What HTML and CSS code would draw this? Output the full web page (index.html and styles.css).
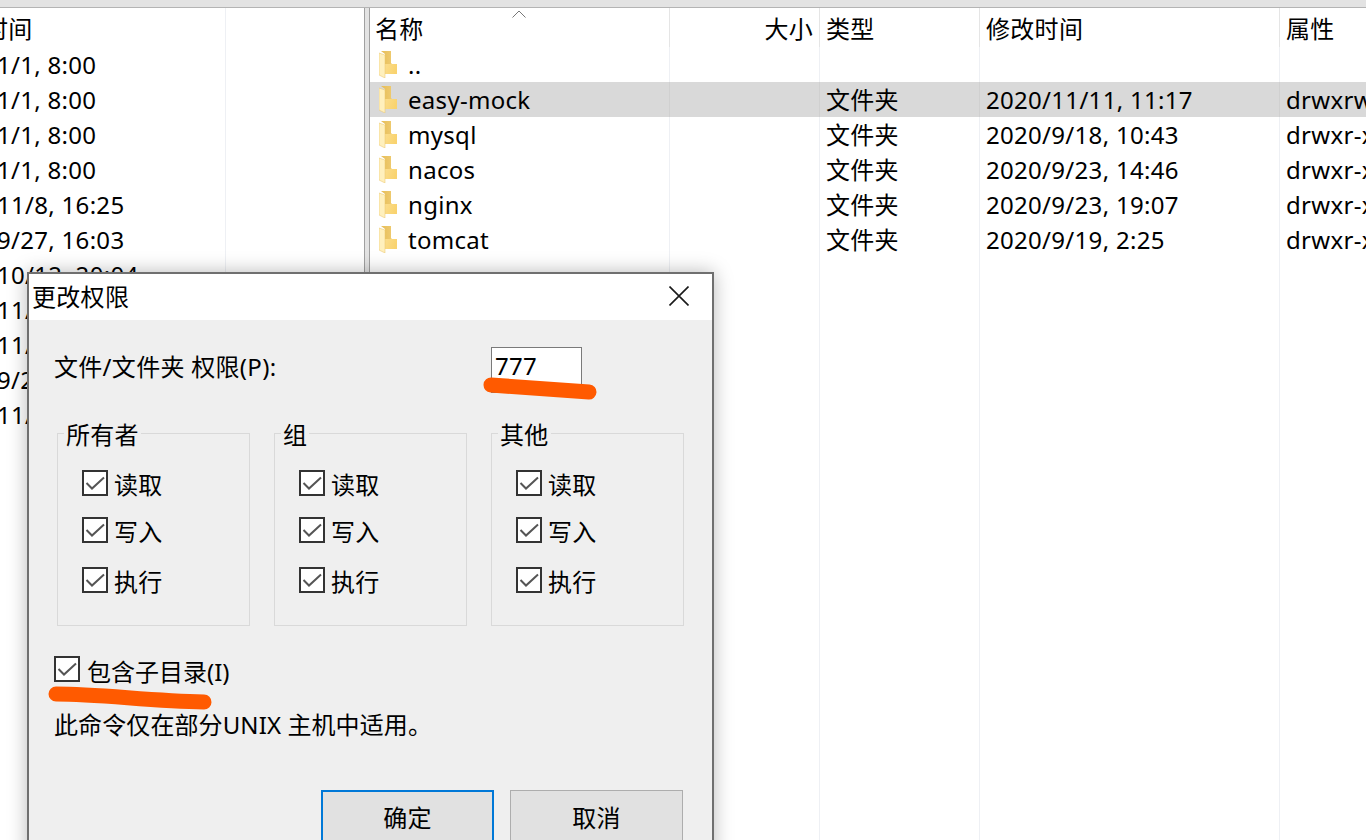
FILE: index.html
```html
<!DOCTYPE html>
<html lang="zh-CN">
<head>
    <meta charset="UTF-8">
    <title>更改权限</title>
    <link rel="stylesheet" href="styles.css">
</head>
<body>
    <svg class="defs" width="0" height="0">
        <symbol id="folder" viewBox="0 0 18 27">
            <defs>
                <linearGradient id="fold-back" x1="0" y1="0" x2="1" y2="0">
                    <stop offset="0" stop-color="#e6bd58"/>
                    <stop offset="1" stop-color="#f3d17a"/>
                </linearGradient>
                <linearGradient id="fold-front" x1="0" y1="0" x2="1" y2="0.3">
                    <stop offset="0" stop-color="#fbdd8c"/>
                    <stop offset="1" stop-color="#f9d36f"/>
                </linearGradient>
            </defs>
            <path d="M2 0H12V12L13 13H18V23H6V3Z" fill="url(#fold-back)"/>
            <path d="M6 13H18V23H6Z" fill="url(#fold-front)"/>
            <path d="M0 2L6 4V27L0 24Z" fill="#fff0bd" stroke="#e8c56a" stroke-width=".5"/>
        </symbol>
        <symbol id="check" viewBox="0 0 22 22">
            <path d="M2.5 11L8 16.5L20 5.5" fill="none" stroke="#555" stroke-width="2"/>
        </symbol>
    </svg>

    <div class="topbar"></div>

    <div class="panes">
        <div class="pane-left">
            <div class="left-col">
                <div class="head clip-head">时间</div>
                <div class="row clip">1/1, 8:00</div>
                <div class="row clip">1/1, 8:00</div>
                <div class="row clip">1/1, 8:00</div>
                <div class="row clip">1/1, 8:00</div>
                <div class="row clip">11/8, 16:25</div>
                <div class="row clip">9/27, 16:03</div>
                <div class="row clip">10/12, 20:04</div>
                <div class="row clip">11/</div>
                <div class="row clip">11/</div>
                <div class="row clip">9/2</div>
                <div class="row clip">11/</div>
            </div>
            <div class="left-rest">
                <div class="head"></div>
            </div>
        </div>

        <div class="splitter"></div>

        <div class="pane-right">
            <div class="table">
                <div class="head c-name">名称<svg class="sort" width="14" height="8" viewBox="0 0 14 8"><path d="M.5 7.5L7 1L13.5 7.5" fill="none" stroke="#777"/></svg></div>
                <div class="head c-size">大小</div>
                <div class="head c-type">类型</div>
                <div class="head c-date">修改时间</div>
                <div class="head c-attr">属性</div>

                <div class="cell c-name"><svg class="icon"><use href="#folder"/></svg>..</div>
                <div class="cell c-size"></div>
                <div class="cell c-type"></div>
                <div class="cell c-date"></div>
                <div class="cell c-attr"></div>

                <div class="cell c-name sel"><svg class="icon"><use href="#folder"/></svg>easy-mock</div>
                <div class="cell c-size sel"></div>
                <div class="cell c-type sel">文件夹</div>
                <div class="cell c-date sel">2020/11/11, 11:17</div>
                <div class="cell c-attr sel">drwxrwxrwx</div>

                <div class="cell c-name"><svg class="icon"><use href="#folder"/></svg>mysql</div>
                <div class="cell c-size"></div>
                <div class="cell c-type">文件夹</div>
                <div class="cell c-date">2020/9/18, 10:43</div>
                <div class="cell c-attr">drwxr-xr-x</div>

                <div class="cell c-name"><svg class="icon"><use href="#folder"/></svg>nacos</div>
                <div class="cell c-size"></div>
                <div class="cell c-type">文件夹</div>
                <div class="cell c-date">2020/9/23, 14:46</div>
                <div class="cell c-attr">drwxr-xr-x</div>

                <div class="cell c-name"><svg class="icon"><use href="#folder"/></svg>nginx</div>
                <div class="cell c-size"></div>
                <div class="cell c-type">文件夹</div>
                <div class="cell c-date">2020/9/23, 19:07</div>
                <div class="cell c-attr">drwxr-xr-x</div>

                <div class="cell c-name"><svg class="icon"><use href="#folder"/></svg>tomcat</div>
                <div class="cell c-size"></div>
                <div class="cell c-type">文件夹</div>
                <div class="cell c-date">2020/9/19, 2:25</div>
                <div class="cell c-attr">drwxr-xr-x</div>

                <div class="filler c-name"></div>
                <div class="filler c-size"></div>
                <div class="filler c-type"></div>
                <div class="filler c-date"></div>
                <div class="filler c-attr"></div>
            </div>
        </div>
    </div>

    <div class="dialog">
        <div class="title-bar">
            <span>更改权限</span>
            <svg class="close" width="20" height="20" viewBox="0 0 20 20"><path d="M.5 .5L19.5 19.5M19.5 .5L.5 19.5" stroke="#1a1a1a" stroke-width="1.6"/></svg>
        </div>
        <div class="dialog-body">
            <div class="perm-line">
                <span>文件/文件夹 权限(P):</span>
                <div class="perm-input">777</div>
            </div>

            <div class="groups">
                <fieldset class="group">
                    <legend>所有者</legend>
                    <div class="check-row"><span class="box"><svg><use href="#check"/></svg></span>读取</div>
                    <div class="check-row"><span class="box"><svg><use href="#check"/></svg></span>写入</div>
                    <div class="check-row"><span class="box"><svg><use href="#check"/></svg></span>执行</div>
                </fieldset>
                <fieldset class="group">
                    <legend>组</legend>
                    <div class="check-row"><span class="box"><svg><use href="#check"/></svg></span>读取</div>
                    <div class="check-row"><span class="box"><svg><use href="#check"/></svg></span>写入</div>
                    <div class="check-row"><span class="box"><svg><use href="#check"/></svg></span>执行</div>
                </fieldset>
                <fieldset class="group">
                    <legend>其他</legend>
                    <div class="check-row"><span class="box"><svg><use href="#check"/></svg></span>读取</div>
                    <div class="check-row"><span class="box"><svg><use href="#check"/></svg></span>写入</div>
                    <div class="check-row"><span class="box"><svg><use href="#check"/></svg></span>执行</div>
                </fieldset>
            </div>

            <div class="check-row sub-dirs"><span class="box"><svg><use href="#check"/></svg></span>包含子目录(I)</div>
            <p class="note">此命令仅在部分UNIX 主机中适用。</p>

            <div class="buttons">
                <button class="btn btn-ok">确定</button>
                <button class="btn">取消</button>
            </div>
        </div>
    </div>

    <!-- marker strokes drawn over the screenshot -->
    <svg class="marks" width="1366" height="840" viewBox="0 0 1366 840">
        <path d="M491 385L589 392" />
        <path d="M56 694C100 694 150 701 204 702" />
    </svg>
</body>
</html>
```

FILE: styles.css
```css
html, body {
    margin: 0;
    height: 840px;
    overflow: hidden;
}

body {
    position: relative;
    background-color: #fff;
    font-family: "Noto Sans", "Noto Sans CJK SC", sans-serif;
    font-size: 24px;
    letter-spacing: 0.3px;
    color: #000;
}

.defs {
    position: absolute;
}

.topbar {
    height: 7px;
    background-color: #e3e3e3;
    border-bottom: 1px solid #b4b4b4;
}

.panes {
    display: flex;
    height: 832px;
}

/* left file list */
.pane-left {
    display: flex;
    width: 364px;
    overflow: hidden;
}

.left-col {
    width: 225px;
    overflow: hidden;
    border-right: 1px solid #eef0f4;
}

.left-rest {
    flex: 1;
}

.splitter {
    width: 4px;
    background-color: #e3e3e3;
    border-left: 1px solid #a0a0a0;
    border-right: 1px solid #a0a0a0;
}

/* right file list */
.pane-right {
    flex: 1;
    overflow: hidden;
}

.table {
    display: grid;
    grid-template-columns: 300px 150px 160px 300px 300px;
    grid-template-rows: 39px repeat(6, 35px) 1fr;
    height: 100%;
}

.head {
    position: relative;
    height: 39px;
    line-height: 42px;
    padding: 0 6px;
    white-space: nowrap;
    box-sizing: border-box;
    border-right: 1px solid #e5e5e5;
}

.head.c-name {
    padding-left: 5px;
}

.left-rest .head {
    border-right: none;
}

.clip-head {
    margin-left: -16px;
    padding: 0;
    border-right: none;
}

.row {
    height: 35px;
    line-height: 35px;
    white-space: nowrap;
}

.clip {
    margin-left: -3px;
}

.cell {
    display: flex;
    align-items: center;
    padding: 0 6px;
    white-space: nowrap;
    box-sizing: border-box;
    border-right: 1px solid #eef0f4;
    overflow: hidden;
}

.cell.c-type {
    padding-bottom: 2px;
}

.filler {
    border-right: 1px solid #eef0f4;
}

.c-size.head {
    text-align: right;
}

.sel {
    background-color: #d9d9d9;
    border-right-color: #d0d0d0;
}

.icon {
    flex: none;
    width: 18px;
    height: 27px;
    margin: 0 11px 0 3px;
}

.sort {
    position: absolute;
    left: 142px;
    top: 2px;
}

/* dialog */
.dialog {
    position: absolute;
    left: 27px;
    top: 272px;
    width: 687px;
    height: 600px;
    box-sizing: border-box;
    border: 2px solid #6f6f6f;
    background-color: #efefef;
    box-shadow: 0 0 18px rgba(0, 0, 0, 0.28);
}

.title-bar {
    display: flex;
    justify-content: space-between;
    align-items: center;
    height: 46px;
    box-sizing: border-box;
    padding: 0 23px 4px 3px;
    background-color: #fff;
}

.close {
    margin-top: 2px;
}

.dialog-body {
    padding: 27px 25px 0;
}

.perm-line {
    display: flex;
    justify-content: space-between;
    height: 46px;
    width: 528px;
}

.perm-line span {
    line-height: 40px;
}

.perm-input {
    width: 91px;
    height: 46px;
    box-sizing: border-box;
    border: 1px solid #7a7a7a;
    background-color: #fff;
    padding-left: 3px;
    line-height: 36px;
}

.groups {
    display: flex;
    gap: 24px;
    margin: 21px 0 0 3px;
}

.group {
    width: 193px;
    height: 212px;
    box-sizing: border-box;
    margin: 0;
    padding: 18px 0 0 24px;
    border: 1px solid #d9d9d9;
    min-width: 0;
}

.group legend {
    padding: 4px 2px 0;
    margin-left: -18px;
    line-height: 34px;
}

.check-row {
    display: flex;
    align-items: flex-start;
    gap: 6px;
    height: 26px;
    margin-bottom: 21px;
    line-height: 30px;
}

.group .check-row:nth-of-type(2) {
    margin-bottom: 24px;
}

.box {
    flex: none;
    width: 26px;
    height: 26px;
    box-sizing: border-box;
    border: 2px solid #333;
    background-color: #fff;
}

.box svg {
    display: block;
    width: 22px;
    height: 22px;
}

.sub-dirs {
    margin: 30px 0 0;
    gap: 7px;
    line-height: 32px;
    letter-spacing: 0;
}

.note {
    margin: 25px 0 0;
    line-height: 36px;
    letter-spacing: 0.1px;
}

.buttons {
    display: flex;
    gap: 16px;
    margin: 47px 0 0 267px;
}

.btn {
    width: 173px;
    height: 60px;
    box-sizing: border-box;
    border: 1px solid #adadad;
    background-color: #e1e1e1;
    font: inherit;
    letter-spacing: inherit;
    color: #000;
    padding: 0 0 8px;
}

.btn-ok {
    border: 2px solid #0078d7;
}

/* orange marker */
.marks {
    position: absolute;
    left: 0;
    top: 0;
}

.marks path {
    fill: none;
    stroke: #ff5a00;
    stroke-width: 15;
    stroke-linecap: round;
}
```
